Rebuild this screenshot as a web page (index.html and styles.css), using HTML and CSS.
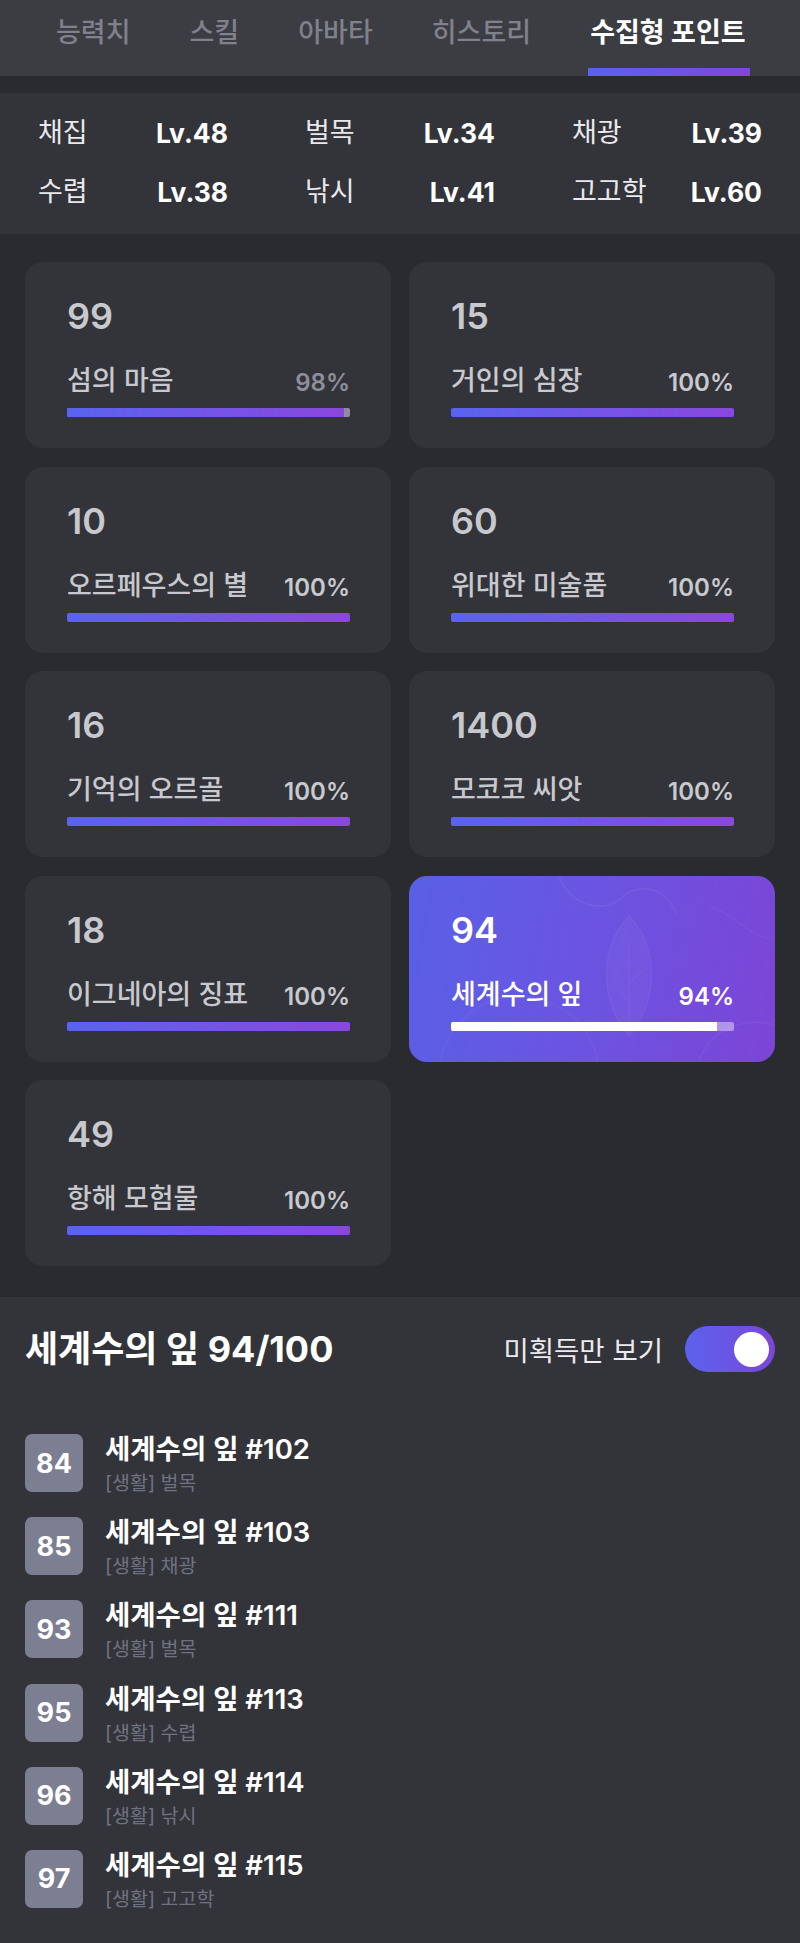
FILE: index.html
```html
<!DOCTYPE html>
<html lang="ko">
<head>
<meta charset="utf-8">
<title>수집형 포인트</title>
<link rel="stylesheet" href="styles.css">
</head>
<body>
<nav class="tabs">
  <div class="tab">능력치</div>
  <div class="tab">스킬</div>
  <div class="tab">아바타</div>
  <div class="tab">히스토리</div>
  <div class="tab active">수집형 포인트</div>
</nav>

<section class="stats">
  <div class="stat"><span class="stat-label">채집</span><span class="stat-value">Lv.48</span></div>
  <div class="stat"><span class="stat-label">벌목</span><span class="stat-value">Lv.34</span></div>
  <div class="stat"><span class="stat-label">채광</span><span class="stat-value">Lv.39</span></div>
  <div class="stat"><span class="stat-label">수렵</span><span class="stat-value">Lv.38</span></div>
  <div class="stat"><span class="stat-label">낚시</span><span class="stat-value">Lv.41</span></div>
  <div class="stat"><span class="stat-label">고고학</span><span class="stat-value">Lv.60</span></div>
</section>

<section class="cards">
  <div class="card">
    <div class="card-num">99</div>
    <div class="card-row"><span class="card-name">섬의 마음</span><span class="card-pct dim">98%</span></div>
    <div class="bar partial"><div class="bar-fill" style="width:98%"></div></div>
  </div>
  <div class="card">
    <div class="card-num">15</div>
    <div class="card-row"><span class="card-name">거인의 심장</span><span class="card-pct">100%</span></div>
    <div class="bar"><div class="bar-fill" style="width:100%"></div></div>
  </div>
  <div class="card">
    <div class="card-num">10</div>
    <div class="card-row"><span class="card-name">오르페우스의 별</span><span class="card-pct">100%</span></div>
    <div class="bar"><div class="bar-fill" style="width:100%"></div></div>
  </div>
  <div class="card">
    <div class="card-num">60</div>
    <div class="card-row"><span class="card-name">위대한 미술품</span><span class="card-pct">100%</span></div>
    <div class="bar"><div class="bar-fill" style="width:100%"></div></div>
  </div>
  <div class="card">
    <div class="card-num">16</div>
    <div class="card-row"><span class="card-name">기억의 오르골</span><span class="card-pct">100%</span></div>
    <div class="bar"><div class="bar-fill" style="width:100%"></div></div>
  </div>
  <div class="card">
    <div class="card-num">1400</div>
    <div class="card-row"><span class="card-name">모코코 씨앗</span><span class="card-pct">100%</span></div>
    <div class="bar"><div class="bar-fill" style="width:100%"></div></div>
  </div>
  <div class="card">
    <div class="card-num">18</div>
    <div class="card-row"><span class="card-name">이그네아의 징표</span><span class="card-pct">100%</span></div>
    <div class="bar"><div class="bar-fill" style="width:100%"></div></div>
  </div>
  <div class="card selected">
    <svg class="card-deco" viewBox="0 0 366 186" preserveAspectRatio="none" aria-hidden="true">
      <path d="M220 40 C 190 70, 190 125, 220 160 C 250 125, 250 70, 220 40 Z" fill="rgba(255,255,255,0.035)" stroke="rgba(255,255,255,0.05)" stroke-width="1.5"/>
      <path d="M220 65 L220 150 M220 90 L207 78 M220 108 L233 94 M220 125 L209 114" stroke="rgba(255,255,255,0.04)" stroke-width="1.5" fill="none"/>
      <path d="M150 0 C 160 30, 195 38, 212 22 C 228 6, 258 10, 268 40" stroke="rgba(255,255,255,0.05)" stroke-width="2" fill="none"/>
      <circle cx="110" cy="200" r="80" fill="none" stroke="rgba(255,255,255,0.035)" stroke-width="2"/>
      <path d="M290 186 C 300 150, 345 140, 366 150" stroke="rgba(255,255,255,0.04)" stroke-width="2" fill="none"/>
      <path d="M300 30 C 330 40, 350 70, 366 60" stroke="rgba(255,255,255,0.035)" stroke-width="2" fill="none"/>
    </svg>
    <div class="card-num">94</div>
    <div class="card-row"><span class="card-name">세계수의 잎</span><span class="card-pct">94%</span></div>
    <div class="bar light"><div class="bar-fill" style="width:94%"></div></div>
  </div>
  <div class="card">
    <div class="card-num">49</div>
    <div class="card-row"><span class="card-name">항해 모험물</span><span class="card-pct">100%</span></div>
    <div class="bar"><div class="bar-fill" style="width:100%"></div></div>
  </div>
</section>

<section class="detail">
  <div class="detail-head">
    <h2 class="detail-title">세계수의 잎 94/100</h2>
    <div class="filter">
      <span class="filter-label">미획득만 보기</span>
      <span class="toggle"><span class="knob"></span></span>
    </div>
  </div>
  <ul class="items">
    <li class="item"><div class="badge">84</div><div class="item-text"><div class="item-title">세계수의 잎 #102</div><div class="item-sub">[생활] 벌목</div></div></li>
    <li class="item"><div class="badge">85</div><div class="item-text"><div class="item-title">세계수의 잎 #103</div><div class="item-sub">[생활] 채광</div></div></li>
    <li class="item"><div class="badge">93</div><div class="item-text"><div class="item-title">세계수의 잎 #111</div><div class="item-sub">[생활] 벌목</div></div></li>
    <li class="item"><div class="badge">95</div><div class="item-text"><div class="item-title">세계수의 잎 #113</div><div class="item-sub">[생활] 수렵</div></div></li>
    <li class="item"><div class="badge">96</div><div class="item-text"><div class="item-title">세계수의 잎 #114</div><div class="item-sub">[생활] 낚시</div></div></li>
    <li class="item"><div class="badge">97</div><div class="item-text"><div class="item-title">세계수의 잎 #115</div><div class="item-sub">[생활] 고고학</div></div></li>
  </ul>
</section>
</body>
</html>
```

FILE: styles.css
```css
* { box-sizing: border-box; }

html, body {
  margin: 0;
  padding: 0;
}

body {
  background: #2a2b2f;
  font-family: Inter, "Noto Sans CJK KR", "Noto Sans", sans-serif;
  color: #ffffff;
  min-height: 100vh;
  display: flex;
  flex-direction: column;
}

/* Tabs */
.tabs {
  height: 76px;
  background: #3c3d42;
  display: flex;
  gap: 55px;
  padding-left: 54px;
  white-space: nowrap;
  overflow: hidden;
}

.tab {
  position: relative;
  padding: 14px 2px 0;
  font-size: 27px;
  line-height: 38px;
  font-weight: 500;
  color: #7f818d;
}

.tab.active {
  color: #ffffff;
  font-weight: 700;
}

.tab.active::after {
  content: "";
  position: absolute;
  left: 0;
  right: -2px;
  bottom: 0;
  height: 8px;
  background: linear-gradient(90deg, #5a62ee, #8046da);
}

/* Stats */
.stats {
  margin-top: 17px;
  background: #333439;
  padding: 22px 38px 24px;
  display: grid;
  grid-template-columns: repeat(3, 1fr);
  column-gap: 77px;
  row-gap: 23px;
}

.stat {
  display: flex;
  justify-content: space-between;
  align-items: center;
  line-height: 36px;
}

.stat-label {
  font-size: 27px;
  color: #e9e9ed;
}

.stat-value {
  font-size: 26.5px;
  font-weight: 700;
  color: #ffffff;
}

/* Cards */
.cards {
  padding: 28px 25px 31px;
  display: grid;
  grid-template-columns: 1fr 1fr;
  column-gap: 18px;
  row-gap: 18.5px;
}

.card {
  position: relative;
  overflow: hidden;
  height: 186px;
  background: #333439;
  border-radius: 18px;
  padding: 32px 41px 31px 42px;
  color: #c8c9ce;
}

.card.selected {
  background: linear-gradient(100deg, #5960e6 0%, #6a55e2 45%, #7c45d7 100%);
  color: #ffffff;
}

.card-deco {
  position: absolute;
  inset: 0;
  width: 100%;
  height: 100%;
}

.card-num,
.card-row,
.bar {
  position: relative;
}

.card-num {
  font-size: 36px;
  line-height: 44px;
  font-weight: 600;
}

.card-row {
  margin-top: 25px;
  display: flex;
  justify-content: space-between;
  align-items: center;
  line-height: 32px;
}

.card-name {
  font-size: 27px;
  font-weight: 500;
}

.card-pct {
  font-size: 24px;
  font-weight: 600;
  padding-top: 4px;
}

.card-pct.dim {
  color: #8d8f9b;
}

.bar {
  margin-top: 9px;
  height: 9px;
  border-radius: 2px;
  overflow: hidden;
  background: #8d8e99;
}

.bar-fill {
  height: 100%;
  background: linear-gradient(90deg, #5a63f0, #8b47de);
}

.bar.light {
  background: rgba(255, 255, 255, 0.42);
}

.bar.light .bar-fill {
  background: #ffffff;
}

/* Detail */
.detail {
  flex: 1;
  background: #333439;
  padding: 29px 25px 30px;
}

.detail-head {
  display: flex;
  justify-content: space-between;
  align-items: center;
  height: 46px;
}

.detail-title {
  margin: 0;
  font-size: 36px;
  font-weight: 700;
  line-height: 46px;
  color: #ffffff;
}

.filter {
  display: flex;
  align-items: center;
  gap: 22px;
}

.filter-label {
  font-size: 27.5px;
  color: #ececf0;
}

.toggle {
  width: 90px;
  height: 46px;
  border-radius: 23px;
  background: linear-gradient(90deg, #5a62ee, #7c46d8);
  display: flex;
  justify-content: flex-end;
  align-items: center;
  padding: 0 6px;
}

.knob {
  width: 35px;
  height: 35px;
  border-radius: 50%;
  background: #ffffff;
}

.items {
  list-style: none;
  margin: 62px 0 0;
  padding: 0;
  display: flex;
  flex-direction: column;
  gap: 21.2px;
}

.item {
  display: flex;
  align-items: flex-start;
  gap: 22px;
}

.badge {
  width: 58px;
  height: 58px;
  border-radius: 7px;
  background: #7c7f91;
  display: flex;
  align-items: center;
  justify-content: center;
  font-size: 27px;
  font-weight: 700;
  color: #ffffff;
  flex-shrink: 0;
}

.item-title {
  font-size: 27.5px;
  font-weight: 600;
  line-height: 30px;
  color: #ffffff;
}

.item-sub {
  margin-top: 6px;
  font-size: 19.5px;
  line-height: 26px;
  color: #6f7282;
}
```
